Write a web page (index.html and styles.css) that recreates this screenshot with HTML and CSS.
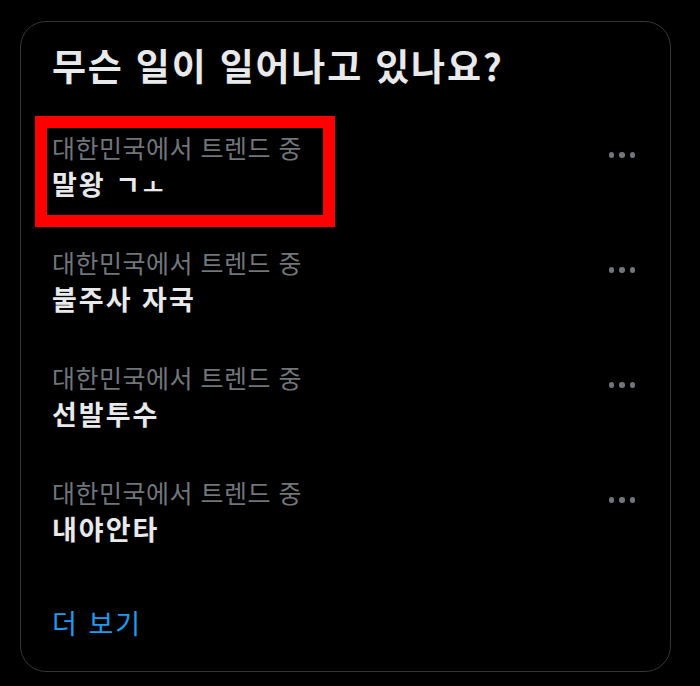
FILE: index.html
```html
<!DOCTYPE html>
<html lang="ko">
<head>
<meta charset="utf-8">
<title>무슨 일이 일어나고 있나요?</title>
<link rel="stylesheet" href="styles.css">
</head>
<body>
<section class="card">
  <h2 class="title">무슨 일이 일어나고 있나요?</h2>
  <ul class="trends">
    <li class="trend">
      <div class="trend-text">
        <div class="trend-label">대한민국에서 트렌드 중</div>
        <div class="trend-name">말왕 <span class="jamo">ㄱ</span><span class="jamo-up">ㅗ</span></div>
      </div>
      <button class="more" aria-label="더 보기"><span></span><span></span><span></span></button>
    </li>
    <li class="trend">
      <div class="trend-text">
        <div class="trend-label">대한민국에서 트렌드 중</div>
        <div class="trend-name">불주사 자국</div>
      </div>
      <button class="more" aria-label="더 보기"><span></span><span></span><span></span></button>
    </li>
    <li class="trend">
      <div class="trend-text">
        <div class="trend-label">대한민국에서 트렌드 중</div>
        <div class="trend-name">선발투수</div>
      </div>
      <button class="more" aria-label="더 보기"><span></span><span></span><span></span></button>
    </li>
    <li class="trend">
      <div class="trend-text">
        <div class="trend-label">대한민국에서 트렌드 중</div>
        <div class="trend-name">내야안타</div>
      </div>
      <button class="more" aria-label="더 보기"><span></span><span></span><span></span></button>
    </li>
  </ul>
  <a class="show-more" href="#">더 보기</a>
</section>
<div class="highlight"></div>
</body>
</html>
```
FILE: styles.css
```css
html, body {
  margin: 0;
  padding: 0;
  background: #000;
}

body {
  width: 700px;
  height: 686px;
  position: relative;
  overflow: hidden;
  font-family: "Noto Sans CJK KR", "Noto Sans", "Liberation Sans", sans-serif;
  color: #e7e9ea;
}

.card {
  box-sizing: border-box;
  margin: 21px 0 0 20px;
  width: 651px;
  height: 651px;
  border: 1.5px solid #33373b;
  border-radius: 26px;
  padding: 22px 35px 0 31px;
  display: flex;
  flex-direction: column;
}

.title {
  margin: 0;
  font-size: 37px;
  line-height: 42px;
  letter-spacing: 1.8px;
  font-weight: 700;
  color: #e7e9ea;
}

.trends {
  list-style: none;
  margin: 25px 0 0;
  padding: 0;
}

.trend {
  height: 115px;
  box-sizing: border-box;
  padding-top: 20px;
  display: flex;
  justify-content: space-between;
  align-items: flex-start;
}

.trend-label {
  font-size: 25px;
  line-height: 32px;
  letter-spacing: 0.5px;
  color: #71767b;
}

.trend-name {
  font-size: 27px;
  line-height: 42px;
  height: 42px;
  letter-spacing: 2px;
  font-weight: 700;
  color: #e7e9ea;
}

.jamo {
  font-weight: 700;
  letter-spacing: 0;
}

.jamo-up {
  font-weight: 700;
  letter-spacing: 0;
  font-size: 22px;
  margin-left: 3px;
}

.more {
  margin-top: 21px;
  padding: 0;
  border: 0;
  background: none;
  display: flex;
  gap: 5px;
}

.more span {
  width: 5.5px;
  height: 5.5px;
  border-radius: 50%;
  background: #71767b;
}

.show-more {
  margin-top: 32px;
  font-size: 27px;
  line-height: 40px;
  letter-spacing: 2px;
  color: #1d9bf0;
  text-decoration: none;
  align-self: flex-start;
}

.highlight {
  position: absolute;
  left: 35px;
  top: 116px;
  width: 300px;
  height: 111px;
  box-sizing: border-box;
  border: 12px solid #ff0000;
}
```
